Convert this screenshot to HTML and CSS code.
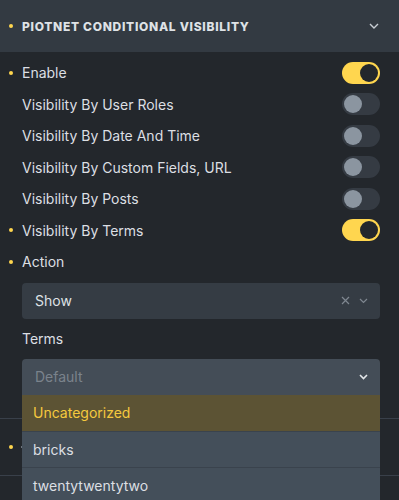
FILE: index.html
```html
<!DOCTYPE html>
<html lang="en">
<head>
    <meta charset="UTF-8">
    <title>Piotnet Conditional Visibility</title>
    <link rel="stylesheet" href="styles.css">
</head>
<body>
    <div class="panel">
        <div class="panel-header">
            <span class="dot"></span>
            <h2 class="panel-title">Piotnet Conditional Visibility</h2>
            <svg class="chevron" width="10" height="6" viewBox="0 0 10 6"><path d="M1 1l4 4 4-4" fill="none" stroke="#c9ced4" stroke-width="1.4"/></svg>
        </div>

        <div class="controls">
            <div class="row">
                <span class="dot"></span>
                <label class="row-label">Enable</label>
                <span class="toggle on"><span class="knob"></span></span>
            </div>
            <div class="row">
                <label class="row-label">Visibility By User Roles</label>
                <span class="toggle"><span class="knob"></span></span>
            </div>
            <div class="row">
                <label class="row-label">Visibility By Date And Time</label>
                <span class="toggle"><span class="knob"></span></span>
            </div>
            <div class="row">
                <label class="row-label">Visibility By Custom Fields, URL</label>
                <span class="toggle"><span class="knob"></span></span>
            </div>
            <div class="row">
                <label class="row-label">Visibility By Posts</label>
                <span class="toggle"><span class="knob"></span></span>
            </div>
            <div class="row">
                <span class="dot"></span>
                <label class="row-label">Visibility By Terms</label>
                <span class="toggle on"><span class="knob"></span></span>
            </div>
            <div class="row">
                <span class="dot"></span>
                <label class="row-label">Action</label>
            </div>

            <div class="select">
                <span class="select-value">Show</span>
                <svg class="clear" width="9" height="9" viewBox="0 0 9 9"><path d="M1 1l7 7M8 1l-7 7" stroke="#7f8790" stroke-width="1.2"/></svg>
                <svg class="select-arrow" width="9" height="6" viewBox="0 0 9 6"><path d="M1 1l3.5 3.5L8 1" fill="none" stroke="#7f8790" stroke-width="1.2"/></svg>
            </div>

            <div class="field-label">Terms</div>

            <div class="select-wrap">
                <div class="select open">
                    <span class="select-value placeholder">Default</span>
                    <svg class="select-arrow" width="9" height="6" viewBox="0 0 9 6"><path d="M1 1l3.5 3.5L8 1" fill="none" stroke="#e4e7ea" stroke-width="1.6"/></svg>
                </div>
                <ul class="options">
                    <li class="option active">Uncategorized</li>
                    <li class="option">bricks</li>
                    <li class="option">twentytwentytwo</li>
                </ul>
            </div>
        </div>

        <!-- next accordion, mostly hidden under the open dropdown -->
        <div class="next-section">
            <span class="dot"></span>
            <span class="next-mark"></span>
        </div>
    </div>
</body>
</html>
```

FILE: styles.css
```css
* {
    margin: 0;
    padding: 0;
    box-sizing: border-box;
    font-family: Inter, 'Noto Sans', sans-serif;
}

body {
    background: #23272c;
    width: 399px;
    height: 500px;
    overflow: hidden;
}

.panel {
    color: #dcdfe3;
}

.panel-header {
    height: 52px;
    background: #333a42;
    display: flex;
    align-items: center;
    padding: 0 20px 0 22px;
    position: relative;
}

.dot {
    position: absolute;
    left: 9px;
    top: 50%;
    width: 4px;
    height: 4px;
    margin-top: -2px;
    border-radius: 50%;
    background: #ffd64f;
}

.row .dot {
    left: -13px;
}

.panel-title {
    flex: 1;
    font-size: 12px;
    font-weight: 800;
    text-transform: uppercase;
    letter-spacing: 0.7px;
    color: #dfe2e6;
}

.chevron {
    display: block;
}

.controls {
    padding: 5px 19px 0 22px;
}

.row {
    position: relative;
    height: 31.5px;
    display: flex;
    align-items: center;
    justify-content: space-between;
}

.row-label {
    font-size: 14px;
    color: #dcdfe3;
}

.toggle {
    width: 38px;
    height: 22px;
    border-radius: 11px;
    background: #353b43;
    padding: 2px;
    display: flex;
}

.knob {
    width: 18px;
    height: 18px;
    border-radius: 50%;
    background: #8b95a0;
}

.toggle.on {
    background: #ffd64f;
    justify-content: flex-end;
}

.toggle.on .knob {
    background: #23272c;
}

.select {
    margin-top: 5px;
    height: 36px;
    border-radius: 4px;
    background: #353c44;
    display: flex;
    align-items: center;
    padding: 0 12px 0 13px;
    gap: 9px;
}

.select-value {
    flex: 1;
    font-size: 14px;
    color: #dfe2e6;
}

.select-value.placeholder {
    color: #7b838c;
}

.field-label {
    height: 40px;
    display: flex;
    align-items: center;
    font-size: 14px;
    color: #dcdfe3;
}

.select-wrap {
    position: relative;
    z-index: 2;
}

.select.open {
    margin-top: 0;
    background: #444d57;
    border-radius: 4px 4px 0 0;
}

.options {
    list-style: none;
    background: #444f5a;
}

.option {
    height: 36px;
    display: flex;
    align-items: center;
    padding: 0 11px;
    font-size: 14px;
    color: #dcdfe3;
    border-top: 1px solid #3a434d;
}

.option.active {
    background: #5c5334;
    color: #f5c93e;
    border-top: none;
}

.next-section {
    position: absolute;
    left: 0;
    right: 0;
    top: 418px;
    height: 58px;
    border-top: 1px solid #39404a;
    border-bottom: 1px solid #39404a;
    padding-left: 21px;
    display: flex;
    align-items: center;
}

.next-mark {
    width: 4px;
    height: 2px;
    background: #6d747c;
}
```
